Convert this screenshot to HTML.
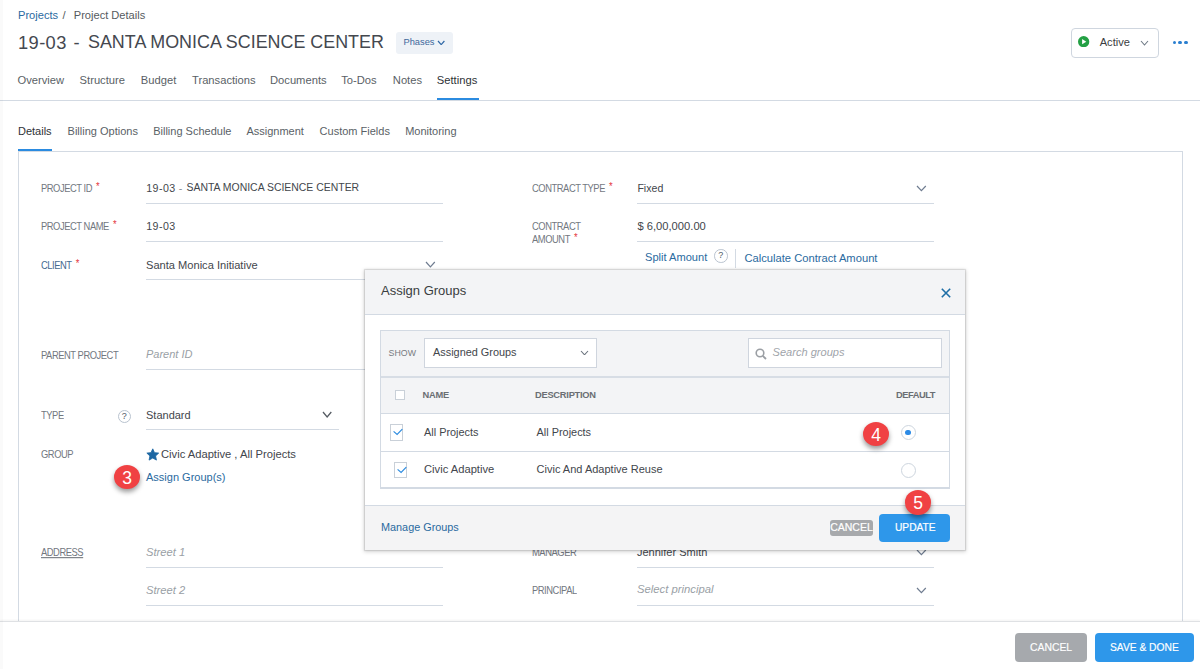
<!DOCTYPE html>
<html><head><meta charset="utf-8"><title>Project Details</title>
<style>
html,body{margin:0;padding:0;background:#fff;width:1200px;height:669px;overflow:hidden;position:relative}
body{font-family:"Liberation Sans",sans-serif}
.t{position:absolute;white-space:pre;line-height:1;font-family:"Liberation Sans",sans-serif}
.r{position:absolute}
.badge{background:#f04143;border-radius:50%;color:#fff;text-align:center;font:17.5px "Liberation Sans",sans-serif;box-shadow:0 3px 5px rgba(0,0,0,0.4)}
</style></head><body>
<div class="t " style="left:18px;top:10px;font-size:11.1px;color:#2a6aa0;">Projects</div>
<div class="t " style="left:62.5px;top:10px;font-size:11.2px;color:#555a60;">/</div>
<div class="t " style="left:73.75px;top:10px;font-size:11.1px;color:#555a60;">Project Details</div>
<div class="t " style="left:18px;top:34px;font-size:18.3px;color:#44484f;letter-spacing:0.4px">19-03</div>
<div class="t " style="left:73.6px;top:34px;font-size:18.3px;color:#44484f;">-</div>
<div class="t " style="left:88px;top:34px;font-size:17.9px;color:#44484f;">SANTA MONICA SCIENCE CENTER</div>
<div class="r" style="left:396px;top:32px;width:57px;height:22px;background:#eef2f7;border-radius:3px"></div>
<div class="t " style="left:403.5px;top:38.3px;font-size:9.3px;color:#40689c;">Phases</div>
<svg class="r" style="left:437.4px;top:39.6px" width="8.4" height="5.6" viewBox="-1 -1 8.4 5.6"><path d="M0 0 L3.2 3.6 L6.4 0" fill="none" stroke="#2f68a6" stroke-width="1.2"/></svg>
<div class="r" style="left:1071px;top:28px;width:86px;height:28px;border:1px solid #cfd6df;border-radius:4px;background:#fff"></div>
<svg class="r" style="left:1078.3px;top:36px" width="11.3" height="11.3" viewBox="0 0 12 12"><circle cx="6" cy="6" r="6" fill="#23a044"/><path d="M4.4 3.2 L8.8 6 L4.4 8.8 Z" fill="#fff"/></svg>
<div class="t " style="left:1099.7px;top:37px;font-size:11.1px;color:#3a3d41;">Active</div>
<svg class="r" style="left:1139.8px;top:40.3px" width="9" height="6" viewBox="-1 -1 9 6"><path d="M0 0 L3.5 4 L7 0" fill="none" stroke="#6f7a86" stroke-width="1.1"/></svg>
<div class="r" style="left:1172.7px;top:40.6px;width:3.8px;height:3.8px;border-radius:50%;background:#2a7fd0"></div>
<div class="r" style="left:1178.3px;top:40.6px;width:3.8px;height:3.8px;border-radius:50%;background:#2a7fd0"></div>
<div class="r" style="left:1183.9px;top:40.6px;width:3.8px;height:3.8px;border-radius:50%;background:#2a7fd0"></div>
<div class="t " style="left:17.5px;top:75px;font-size:11.2px;color:#5a5f66;">Overview</div>
<div class="t " style="left:79.6px;top:75px;font-size:11.2px;color:#5a5f66;">Structure</div>
<div class="t " style="left:140.8px;top:75px;font-size:11.2px;color:#5a5f66;">Budget</div>
<div class="t " style="left:192px;top:75px;font-size:11.2px;color:#5a5f66;">Transactions</div>
<div class="t " style="left:270px;top:75px;font-size:11.2px;color:#5a5f66;">Documents</div>
<div class="t " style="left:341.2px;top:75px;font-size:11.2px;color:#5a5f66;">To-Dos</div>
<div class="t " style="left:392.8px;top:75px;font-size:11.2px;color:#5a5f66;">Notes</div>
<div class="t " style="left:436.8px;top:75px;font-size:11.2px;color:#2e3236;">Settings</div>
<div class="r" style="left:0px;top:100px;width:1200px;height:1px;background:#d3dae3"></div>
<div class="r" style="left:437px;top:98px;width:42px;height:2px;background:#2b8be0"></div>
<div class="t " style="left:18px;top:126px;font-size:11px;color:#2e3236;">Details</div>
<div class="t " style="left:67.6px;top:126px;font-size:11px;color:#5a5f66;">Billing Options</div>
<div class="t " style="left:153.2px;top:126px;font-size:11px;color:#5a5f66;">Billing Schedule</div>
<div class="t " style="left:246.4px;top:126px;font-size:11px;color:#5a5f66;">Assignment</div>
<div class="t " style="left:319.6px;top:126px;font-size:11px;color:#5a5f66;">Custom Fields</div>
<div class="t " style="left:405.2px;top:126px;font-size:11px;color:#5a5f66;">Monitoring</div>
<div class="r" style="left:18px;top:151px;width:1163px;height:480px;border:1px solid #d3dae3;border-bottom:none"></div>
<div class="r" style="left:18px;top:149px;width:34px;height:2px;background:#2b8be0"></div>
<div class="t " style="left:41px;top:184px;font-size:9.4px;color:#73787f;letter-spacing:-0.45px;transform:scaleY(1.1);transform-origin:0 85%;">PROJECT ID<span style="color:#e5393f;position:relative;top:-2px;margin-left:4px">*</span></div>
<div class="t " style="left:146.2px;top:183px;font-size:10.65px;color:#42464c;letter-spacing:0.45px">19-03</div>
<div class="t " style="left:178.8px;top:183px;font-size:10.65px;color:#8a8e94;">-</div>
<div class="t " style="left:186.5px;top:183px;font-size:10.45px;color:#42464c;">SANTA MONICA SCIENCE CENTER</div>
<div class="r" style="left:146px;top:203px;width:297px;height:1px;background:#d3dae3"></div>
<div class="t " style="left:41px;top:222px;font-size:9.4px;color:#73787f;letter-spacing:-0.45px;transform:scaleY(1.1);transform-origin:0 85%;">PROJECT NAME<span style="color:#e5393f;position:relative;top:-2px;margin-left:4px">*</span></div>
<div class="t " style="left:146.2px;top:221px;font-size:10.65px;color:#42464c;letter-spacing:0.45px">19-03</div>
<div class="r" style="left:146px;top:241px;width:297px;height:1px;background:#d3dae3"></div>
<div class="t " style="left:41px;top:261px;font-size:9.4px;color:#45698f;letter-spacing:-0.45px;transform:scaleY(1.1);transform-origin:0 85%;">CLIENT<span style="color:#e5393f;position:relative;top:-2px;margin-left:4px">*</span></div>
<div class="t " style="left:146px;top:260px;font-size:11.1px;color:#42464c;">Santa Monica Initiative</div>
<svg class="r" style="left:425px;top:261.3px" width="10.8" height="6.8" viewBox="-1 -1 10.8 6.8"><path d="M0 0 L4.4 4.8 L8.8 0" fill="none" stroke="#6f7c90" stroke-width="1.2"/></svg>
<div class="r" style="left:146px;top:279px;width:297px;height:1px;background:#d3dae3"></div>
<div class="t " style="left:41px;top:351px;font-size:9.4px;color:#73787f;letter-spacing:-0.45px;transform:scaleY(1.1);transform-origin:0 85%;">PARENT PROJECT</div>
<div class="t " style="left:146px;top:349px;font-size:11px;color:#9a9fa6;font-style:italic">Parent ID</div>
<div class="r" style="left:146px;top:369px;width:297px;height:1px;background:#d3dae3"></div>
<div class="t " style="left:41px;top:411px;font-size:9.4px;color:#73787f;letter-spacing:-0.45px;transform:scaleY(1.1);transform-origin:0 85%;">TYPE</div>
<div class="r" style="left:117.8px;top:409.9px;width:11px;height:11px;border:1px solid #b9c3cf;border-radius:50%;font:9px/11px 'Liberation Sans';color:#4f5a66;text-align:center">?</div>
<div class="t " style="left:146px;top:410px;font-size:11px;color:#42464c;">Standard</div>
<svg class="r" style="left:322px;top:411.3px" width="10.3" height="7" viewBox="-1 -1 10.3 7"><path d="M0 0 L4.15 5 L8.3 0" fill="none" stroke="#555b62" stroke-width="1.25"/></svg>
<div class="r" style="left:146px;top:429px;width:193px;height:1px;background:#d3dae3"></div>
<div class="t " style="left:41px;top:449.5px;font-size:9.4px;color:#73787f;letter-spacing:-0.45px;transform:scaleY(1.1);transform-origin:0 85%;">GROUP</div>
<svg class="r" style="left:145.5px;top:447.8px" width="13.5" height="13.5" viewBox="0 0 24 24"><path d="M12 1.5 L15.1 8.3 L22.5 9.1 L17 14.1 L18.5 21.5 L12 17.8 L5.5 21.5 L7 14.1 L1.5 9.1 L8.9 8.3 Z" fill="#1d67a3" stroke="#1d67a3" stroke-width="1.5" stroke-linejoin="round"/></svg>
<div class="t " style="left:161px;top:449px;font-size:11.2px;color:#42464c;">Civic Adaptive , All Projects</div>
<div class="t " style="left:146px;top:472px;font-size:11px;color:#2a6aa0;">Assign Group(s)</div>
<div class="r badge" style="left:113.75px;top:464.95px;width:26.5px;height:24.5px;line-height:27.0px">3</div>
<div class="t " style="left:41px;top:548px;font-size:9.4px;color:#73787f;letter-spacing:-0.45px;transform:scaleY(1.1);transform-origin:0 85%;text-decoration:underline">ADDRESS</div>
<div class="t " style="left:146px;top:547px;font-size:11.2px;color:#9a9fa6;font-style:italic">Street 1</div>
<div class="r" style="left:146px;top:567px;width:297px;height:1px;background:#d3dae3"></div>
<div class="t " style="left:146px;top:584.5px;font-size:11.2px;color:#9a9fa6;font-style:italic">Street 2</div>
<div class="r" style="left:146px;top:605px;width:297px;height:1px;background:#d3dae3"></div>
<div class="t " style="left:532px;top:184px;font-size:9.4px;color:#73787f;letter-spacing:-0.45px;transform:scaleY(1.1);transform-origin:0 85%;">CONTRACT TYPE<span style="color:#e5393f;position:relative;top:-2px;margin-left:4px">*</span></div>
<div class="t " style="left:637.4px;top:183px;font-size:10.6px;color:#42464c;">Fixed</div>
<svg class="r" style="left:916px;top:185px" width="10.8" height="6.6" viewBox="-1 -1 10.8 6.6"><path d="M0 0 L4.4 4.6 L8.8 0" fill="none" stroke="#6f7c90" stroke-width="1.2"/></svg>
<div class="r" style="left:637px;top:203px;width:297px;height:1px;background:#d3dae3"></div>
<div class="t " style="left:532px;top:221.8px;font-size:9.4px;color:#73787f;letter-spacing:-0.45px;transform:scaleY(1.1);transform-origin:0 85%">CONTRACT</div>
<div class="t " style="left:532px;top:235px;font-size:9.4px;color:#73787f;letter-spacing:-0.45px;transform:scaleY(1.1);transform-origin:0 85%;">AMOUNT<span style="color:#e5393f;position:relative;top:-2px;margin-left:4px">*</span></div>
<div class="t " style="left:637.4px;top:221px;font-size:11.2px;color:#42464c;">$ 6,00,000.00</div>
<div class="r" style="left:637px;top:241px;width:297px;height:1px;background:#d3dae3"></div>
<div class="t " style="left:645px;top:252px;font-size:11.1px;color:#2a6aa0;">Split Amount</div>
<div class="r" style="left:714.05px;top:249.25px;width:11.5px;height:11.5px;border:1px solid #b9c3cf;border-radius:50%;font:9px/11.5px 'Liberation Sans';color:#4f5a66;text-align:center">?</div>
<div class="r" style="left:735px;top:249px;width:1px;height:19px;background:#d3dae3"></div>
<div class="t " style="left:744.4px;top:253px;font-size:11.2px;color:#2a6aa0;">Calculate Contract Amount</div>
<div class="t " style="left:532px;top:548px;font-size:9.4px;color:#73787f;letter-spacing:-0.45px;transform:scaleY(1.1);transform-origin:0 85%;">MANAGER<span style="color:#e5393f;position:relative;top:-2px;margin-left:4px">*</span></div>
<div class="t " style="left:637px;top:547px;font-size:11px;color:#42464c;">Jennifer Smith</div>
<svg class="r" style="left:916px;top:549.4px" width="10.8" height="6.6" viewBox="-1 -1 10.8 6.6"><path d="M0 0 L4.4 4.6 L8.8 0" fill="none" stroke="#6f7c90" stroke-width="1.2"/></svg>
<div class="r" style="left:637px;top:567px;width:297px;height:1px;background:#d3dae3"></div>
<div class="t " style="left:532px;top:586px;font-size:9.4px;color:#73787f;letter-spacing:-0.45px;transform:scaleY(1.1);transform-origin:0 85%;">PRINCIPAL</div>
<div class="t " style="left:637px;top:584.2px;font-size:11.3px;color:#9a9fa6;font-style:italic">Select principal</div>
<svg class="r" style="left:916px;top:587.3px" width="10.8" height="6.6" viewBox="-1 -1 10.8 6.6"><path d="M0 0 L4.4 4.6 L8.8 0" fill="none" stroke="#6f7c90" stroke-width="1.2"/></svg>
<div class="r" style="left:637px;top:604.5px;width:297px;height:1px;background:#d3dae3"></div>
<div class="r" style="left:0px;top:621px;width:1200px;height:48px;background:#fff;border-top:1px solid #dfe1e4;box-shadow:0 -1px 2px rgba(0,0,0,0.05)"></div>
<div class="r" style="left:1015px;top:633px;width:72px;height:29px;background:#a6a9ad;border-radius:4px"></div>
<div class="t " style="left:1030px;top:643px;font-size:10.4px;color:#fff;-webkit-text-stroke:0.15px #fff">CANCEL</div>
<div class="r" style="left:1095px;top:633px;width:99px;height:29px;background:#2e97ea;border-radius:4px"></div>
<div class="t " style="left:1110px;top:643px;font-size:10.25px;color:#fff;-webkit-text-stroke:0.15px #fff">SAVE &amp; DONE</div>
<div class="r" style="left:365px;top:270px;width:600px;height:280px;background:#fff;box-shadow:0 0 1px 1px rgba(0,0,0,0.10), 0 1px 4px 1px rgba(0,0,0,0.16)"></div>
<div class="r" style="left:365px;top:270px;width:600px;height:44px;background:#f3f4f6;border-bottom:1px solid #d3dae3"></div>
<div class="t " style="left:381px;top:284px;font-size:13px;color:#3a3d41;">Assign Groups</div>
<svg class="r" style="left:940.5px;top:287.6px" width="10" height="10" viewBox="0 0 10 10"><path d="M0.8 0.8 L9.2 9.2 M9.2 0.8 L0.8 9.2" stroke="#1d6ea6" stroke-width="1.6"/></svg>
<div class="r" style="left:380px;top:330px;width:570px;height:159px;border:1px solid #d3dae3;border-bottom:2px solid #d3dae3;box-sizing:border-box;background:#fff"></div>
<div class="r" style="left:381px;top:331px;width:568px;height:45px;background:#f3f4f6"></div>
<div class="r" style="left:381px;top:376px;width:568px;height:2px;background:#d7dde5"></div>
<div class="r" style="left:381px;top:378px;width:568px;height:35px;background:#f3f4f6"></div>
<div class="r" style="left:381px;top:413px;width:568px;height:1px;background:#d3dae3"></div>
<div class="t " style="left:388.6px;top:349.4px;font-size:8.8px;color:#777b80;">SHOW</div>
<div class="r" style="left:424px;top:338px;width:173px;height:30px;background:#fff;border:1px solid #cfd5de;box-sizing:border-box"></div>
<div class="t " style="left:433px;top:347.4px;font-size:10.9px;color:#42464c;">Assigned Groups</div>
<svg class="r" style="left:580px;top:349.6px" width="9" height="5.8" viewBox="-1 -1 9 5.8"><path d="M0 0 L3.5 3.8 L7 0" fill="none" stroke="#6a737d" stroke-width="1.1"/></svg>
<div class="r" style="left:748px;top:338px;width:194px;height:30px;background:#fff;border:1px solid #cfd5de;box-sizing:border-box"></div>
<svg class="r" style="left:755px;top:348px" width="13" height="12" viewBox="0 0 13 12"><circle cx="5" cy="5" r="3.8" fill="none" stroke="#9b9fa4" stroke-width="1.6"/><path d="M7.8 7.8 L11 11" stroke="#9b9fa4" stroke-width="1.8"/></svg>
<div class="t " style="left:772.6px;top:347px;font-size:11.05px;color:#a0a4aa;font-style:italic">Search groups</div>
<div class="r" style="left:395px;top:390px;width:10px;height:10px;background:#fff;border:1px solid #c9d0d8;box-sizing:border-box"></div>
<div class="t " style="left:422.6px;top:391.2px;font-size:9.3px;color:#6a6e73;font-weight:bold;letter-spacing:-0.25px">NAME</div>
<div class="t " style="left:535px;top:391.2px;font-size:9.3px;color:#6a6e73;font-weight:bold;letter-spacing:-0.25px">DESCRIPTION</div>
<div class="t " style="left:896px;top:391.2px;font-size:9.3px;color:#6a6e73;font-weight:bold;letter-spacing:-0.45px">DEFAULT</div>
<div class="r" style="left:381px;top:451px;width:568px;height:1px;background:#d3dae3"></div>
<div class="r" style="left:390px;top:424px;width:13px;height:17px;border:1px solid #c9d0d8;box-sizing:border-box;background:#fff"></div>
<svg class="r" style="left:390px;top:424px" width="15" height="17" viewBox="0 0 15 17"><path d="M3.6 7.3 L7.1 10.5 L12.3 5.1" fill="none" stroke="#2b8be0" stroke-width="1.15"/></svg>
<div class="t " style="left:424px;top:427px;font-size:10.9px;color:#42464c;">All Projects</div>
<div class="t " style="left:536.6px;top:427px;font-size:10.9px;color:#42464c;">All Projects</div>
<div class="r" style="left:394px;top:462px;width:13px;height:16px;border:1px solid #c9d0d8;box-sizing:border-box;background:#fff"></div>
<svg class="r" style="left:394px;top:462px" width="15" height="16" viewBox="0 0 15 16"><path d="M3.6 7.3 L7.1 10.5 L12.3 5.1" fill="none" stroke="#2b8be0" stroke-width="1.15"/></svg>
<div class="t " style="left:424px;top:464px;font-size:11.2px;color:#42464c;">Civic Adaptive</div>
<div class="t " style="left:536.6px;top:464px;font-size:11px;color:#42464c;">Civic And Adaptive Reuse</div>
<div class="r" style="left:900.5px;top:425.1px;width:15px;height:15px;border:1px solid #cdd5de;border-radius:50%;box-sizing:border-box;background:#fff"></div>
<div class="r" style="left:905.4px;top:430.0px;width:5.2px;height:5.2px;background:#2b8ae6;border-radius:50%"></div>
<div class="r" style="left:900.5px;top:462.9px;width:15px;height:15px;border:1px solid #cdd5de;border-radius:50%;box-sizing:border-box;background:#fff"></div>
<div class="r badge" style="left:862.75px;top:421.75px;width:26.5px;height:24.5px;line-height:27.0px">4</div>
<div class="r" style="left:365px;top:505px;width:600px;height:44px;background:#f4f4f5;border-top:1px solid #d3dae3"></div>
<div class="t " style="left:381px;top:522px;font-size:10.85px;color:#2a6aa0;">Manage Groups</div>
<div class="r" style="left:830px;top:520px;width:43px;height:16px;background:#a7a9ac;border-radius:3px"></div>
<div class="t " style="left:830.2px;top:522.4px;font-size:10.5px;color:#fff;-webkit-text-stroke:0.2px #fff">CANCEL</div>
<div class="r" style="left:879px;top:514px;width:71px;height:28px;background:#2e97ea;border-radius:4px"></div>
<div class="t " style="left:895px;top:523.4px;font-size:10.2px;color:#fff;-webkit-text-stroke:0.2px #fff">UPDATE</div>
<div class="r badge" style="left:904.75px;top:490.15px;width:26.5px;height:24.5px;line-height:27.0px">5</div>
<div class="r" style="left:0px;top:0px;width:3px;height:669px;background:rgba(0,0,0,0.02)"></div>
</body></html>
